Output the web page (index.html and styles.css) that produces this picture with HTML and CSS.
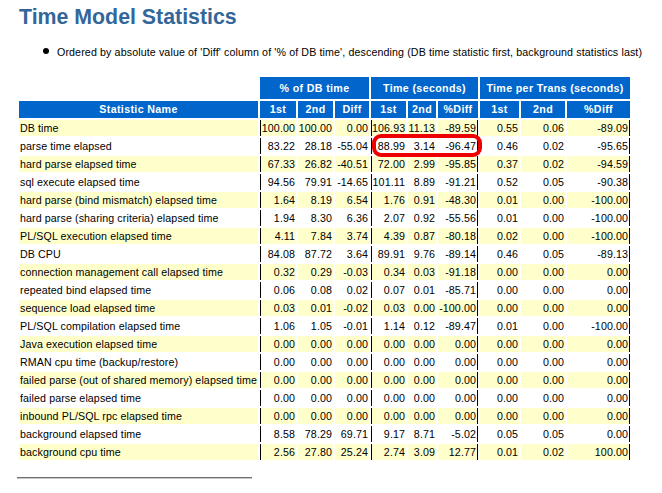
FILE: index.html
```html
<!DOCTYPE html>
<html>
<head>
<meta charset="utf-8">
<title>Time Model Statistics</title>
<link rel="stylesheet" href="styles.css">
</head>
<body>
<div class="page">
  <h2 class="title">Time Model Statistics</h2>
  <ul class="notes">
    <li>Ordered by absolute value of 'Diff' column of '% of DB time', descending (DB time statistic first, background statistics last)</li>
  </ul>
  <div class="table-wrap">
    <table class="stats">
      <colgroup>
        <col class="c-name"><col class="c-p1"><col class="c-p2"><col class="c-pd">
        <col class="c-t1"><col class="c-t2"><col class="c-td">
        <col class="c-r1"><col class="c-r2"><col class="c-rd">
      </colgroup>
      <thead>
        <tr class="h1">
          <th class="blank"></th>
          <th colspan="3">% of DB time</th>
          <th colspan="3">Time (seconds)</th>
          <th colspan="3">Time per Trans (seconds)</th>
        </tr>
        <tr class="h2">
          <th>Statistic Name</th>
          <th>1st</th><th>2nd</th><th>Diff</th>
          <th>1st</th><th>2nd</th><th>%Diff</th>
          <th>1st</th><th>2nd</th><th>%Diff</th>
        </tr>
      </thead>
      <tbody>
        <tr class="odd"><td class="name">DB time</td><td class="bl">100.00</td><td>100.00</td><td>0.00</td><td class="bl">106.93</td><td>11.13</td><td class="br">-89.59</td><td>0.55</td><td>0.06</td><td class="br">-89.09</td></tr>
        <tr class="even"><td class="name">parse time elapsed</td><td class="bl">83.22</td><td>28.18</td><td>-55.04</td><td class="bl">88.99</td><td>3.14</td><td class="br">-96.47</td><td>0.46</td><td>0.02</td><td class="br">-95.65</td></tr>
        <tr class="odd"><td class="name">hard parse elapsed time</td><td class="bl">67.33</td><td>26.82</td><td>-40.51</td><td class="bl">72.00</td><td>2.99</td><td class="br">-95.85</td><td>0.37</td><td>0.02</td><td class="br">-94.59</td></tr>
        <tr class="even"><td class="name">sql execute elapsed time</td><td class="bl">94.56</td><td>79.91</td><td>-14.65</td><td class="bl">101.11</td><td>8.89</td><td class="br">-91.21</td><td>0.52</td><td>0.05</td><td class="br">-90.38</td></tr>
        <tr class="odd"><td class="name">hard parse (bind mismatch) elapsed time</td><td class="bl">1.64</td><td>8.19</td><td>6.54</td><td class="bl">1.76</td><td>0.91</td><td class="br">-48.30</td><td>0.01</td><td>0.00</td><td class="br">-100.00</td></tr>
        <tr class="even"><td class="name">hard parse (sharing criteria) elapsed time</td><td class="bl">1.94</td><td>8.30</td><td>6.36</td><td class="bl">2.07</td><td>0.92</td><td class="br">-55.56</td><td>0.01</td><td>0.00</td><td class="br">-100.00</td></tr>
        <tr class="odd"><td class="name">PL/SQL execution elapsed time</td><td class="bl">4.11</td><td>7.84</td><td>3.74</td><td class="bl">4.39</td><td>0.87</td><td class="br">-80.18</td><td>0.02</td><td>0.00</td><td class="br">-100.00</td></tr>
        <tr class="even"><td class="name">DB CPU</td><td class="bl">84.08</td><td>87.72</td><td>3.64</td><td class="bl">89.91</td><td>9.76</td><td class="br">-89.14</td><td>0.46</td><td>0.05</td><td class="br">-89.13</td></tr>
        <tr class="odd"><td class="name">connection management call elapsed time</td><td class="bl">0.32</td><td>0.29</td><td>-0.03</td><td class="bl">0.34</td><td>0.03</td><td class="br">-91.18</td><td>0.00</td><td>0.00</td><td class="br">0.00</td></tr>
        <tr class="even"><td class="name">repeated bind elapsed time</td><td class="bl">0.06</td><td>0.08</td><td>0.02</td><td class="bl">0.07</td><td>0.01</td><td class="br">-85.71</td><td>0.00</td><td>0.00</td><td class="br">0.00</td></tr>
        <tr class="odd"><td class="name">sequence load elapsed time</td><td class="bl">0.03</td><td>0.01</td><td>-0.02</td><td class="bl">0.03</td><td>0.00</td><td class="br">-100.00</td><td>0.00</td><td>0.00</td><td class="br">0.00</td></tr>
        <tr class="even"><td class="name">PL/SQL compilation elapsed time</td><td class="bl">1.06</td><td>1.05</td><td>-0.01</td><td class="bl">1.14</td><td>0.12</td><td class="br">-89.47</td><td>0.01</td><td>0.00</td><td class="br">-100.00</td></tr>
        <tr class="odd"><td class="name">Java execution elapsed time</td><td class="bl">0.00</td><td>0.00</td><td>0.00</td><td class="bl">0.00</td><td>0.00</td><td class="br">0.00</td><td>0.00</td><td>0.00</td><td class="br">0.00</td></tr>
        <tr class="even"><td class="name">RMAN cpu time (backup/restore)</td><td class="bl">0.00</td><td>0.00</td><td>0.00</td><td class="bl">0.00</td><td>0.00</td><td class="br">0.00</td><td>0.00</td><td>0.00</td><td class="br">0.00</td></tr>
        <tr class="odd"><td class="name">failed parse (out of shared memory) elapsed time</td><td class="bl">0.00</td><td>0.00</td><td>0.00</td><td class="bl">0.00</td><td>0.00</td><td class="br">0.00</td><td>0.00</td><td>0.00</td><td class="br">0.00</td></tr>
        <tr class="even"><td class="name">failed parse elapsed time</td><td class="bl">0.00</td><td>0.00</td><td>0.00</td><td class="bl">0.00</td><td>0.00</td><td class="br">0.00</td><td>0.00</td><td>0.00</td><td class="br">0.00</td></tr>
        <tr class="odd"><td class="name">inbound PL/SQL rpc elapsed time</td><td class="bl">0.00</td><td>0.00</td><td>0.00</td><td class="bl">0.00</td><td>0.00</td><td class="br">0.00</td><td>0.00</td><td>0.00</td><td class="br">0.00</td></tr>
        <tr class="even"><td class="name">background elapsed time</td><td class="bl">8.58</td><td>78.29</td><td>69.71</td><td class="bl">9.17</td><td>8.71</td><td class="br">-5.02</td><td>0.05</td><td>0.05</td><td class="br">0.00</td></tr>
        <tr class="odd"><td class="name">background cpu time</td><td class="bl">2.56</td><td>27.80</td><td>25.24</td><td class="bl">2.74</td><td>3.09</td><td class="br">12.77</td><td>0.01</td><td>0.02</td><td class="br">100.00</td></tr>
      </tbody>
    </table>
    <div class="highlight"></div>
  </div>
  <div class="rule"></div>
</div>
</body>
</html>
```

FILE: styles.css
```css
html, body {
  margin: 0;
  padding: 0;
  background: #ffffff;
}

.page {
  padding: 0 0 0 19px;
  font-family: "Liberation Sans", Arial, Helvetica, sans-serif;
  font-size: 8pt;
  letter-spacing: 0.1px;
  color: #000000;
}

.title {
  margin: 5px 0 0 0;
  font: bold 16pt "Liberation Sans", Arial, Helvetica, sans-serif;
  letter-spacing: 0;
  line-height: 24px;
  color: #336699;
}

.notes {
  list-style: none;
  margin: 15px 0 0 0;
  padding: 0;
  line-height: 16px;
  letter-spacing: 0.12px;
}

.notes li {
  display: flex;
  align-items: center;
  white-space: nowrap;
}

.notes li::before {
  content: "";
  flex: none;
  width: 6px;
  height: 6px;
  border-radius: 50%;
  background: #000000;
  margin: -2px 8px 0 24px;
}

.table-wrap {
  position: relative;
  margin: 15px 0 0 -2px;
  width: 615px;
}

.stats {
  border-collapse: separate;
  border-spacing: 2px;
  table-layout: fixed;
  width: 615px;
  font-size: 8pt;
}

.c-name { width: 239px; }
.c-p1 { width: 36px; }
.c-p2 { width: 35px; }
.c-pd { width: 34px; }
.c-t1 { width: 35px; }
.c-t2 { width: 28px; }
.c-td { width: 40px; }
.c-r1 { width: 39px; }
.c-r2 { width: 44px; }
.c-rd { width: 63px; }

.stats th {
  background: #0066cc;
  color: #ffffff;
  font-weight: bold;
  letter-spacing: 0.35px;
  text-align: center;
  padding: 0 1px;
  white-space: nowrap;
  vertical-align: middle;
}

.stats .h1 th {
  height: 22px;
  line-height: 22px;
}

.stats .h2 th {
  height: 17px;
  line-height: 17px;
}

.stats th.blank {
  background: transparent;
}

.stats td {
  height: 16px;
  line-height: 16px;
  padding: 0 1px 0 0;
  text-align: right;
  white-space: nowrap;
  vertical-align: middle;
  overflow: hidden;
}

.stats td.name {
  text-align: left;
  padding: 0 0 0 1px;
}

.stats tr.odd td {
  background: #ffffcc;
}

.stats tr.even td {
  background: #ffffff;
}

.stats td.bl {
  border-left: 1px solid #000000;
}

.stats td.br {
  border-right: 1px solid #000000;
}

.highlight {
  position: absolute;
  left: 355px;
  top: 59px;
  width: 102px;
  height: 15px;
  border: 4px solid #ee0000;
  border-radius: 9px;
}

.rule {
  margin: 15px 0 0 -2px;
  width: 235px;
  height: 0;
  border-top: 1px solid #707070;
  border-bottom: 1px solid #c8c8c8;
}
```
